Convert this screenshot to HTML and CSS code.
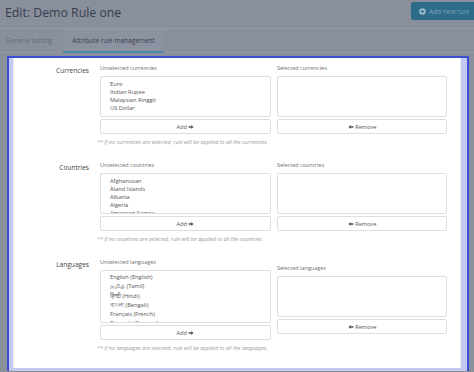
FILE: index.html
```html
<!DOCTYPE html>
<html lang="en">
<head>
<meta charset="utf-8">
<title>Edit: Demo Rule one</title>
<link rel="stylesheet" href="styles.css">
</head>
<body>
<header class="page-head">
  <h1 class="page-title">Edit: Demo Rule one</h1>
  <button class="btn-new-rule" type="button">
    <svg class="ico-plus" viewBox="0 0 16 16" aria-hidden="true"><circle cx="8" cy="8" r="7.5" fill="currentColor"/><path d="M7 4h2v3h3v2H9v3H7V9H4V7h3z" fill="#2c6c88"/></svg>
    Add new rule
  </button>
</header>
<nav class="tabs">
  <a class="tab">General setting</a>
  <a class="tab active">Attribute rule management</a>
</nav>
<div class="tour-panel">
  <div class="card">
    <section class="rule">
      <div class="rule-grid">
        <div class="rule-label">Currencies</div>
        <div class="col">
          <div class="field-label">Unselected currencies</div>
          <div class="listbox">
            <div>Euro</div><div>Indian Rupee</div><div>Malaysian Ringgit</div><div>US Dollar</div>
          </div>
          <button class="btn" type="button">Add <svg class="arrow" viewBox="0 0 16 16"><path d="M1.5 6.3h7.2V2.8L14.8 8l-6.1 5.2V9.7H1.5z" fill="currentColor"/></svg></button>
        </div>
        <div class="col">
          <div class="field-label">Selected currencies</div>
          <div class="listbox"></div>
          <button class="btn" type="button"><svg class="arrow" viewBox="0 0 16 16"><path d="M14.5 6.3H7.3V2.8L1.2 8l6.1 5.2V9.7h7.2z" fill="currentColor"/></svg> Remove</button>
        </div>
      </div>
      <p class="note">** If no currencies are selected, rule will be applied to all the currencies.</p>
    </section>

    <section class="rule">
      <div class="rule-grid">
        <div class="rule-label">Countries</div>
        <div class="col">
          <div class="field-label">Unselected countries</div>
          <div class="listbox">
            <div>Afghanistan</div><div>Åland Islands</div><div>Albania</div><div>Algeria</div><div>American Samoa</div>
          </div>
          <button class="btn" type="button">Add <svg class="arrow" viewBox="0 0 16 16"><path d="M1.5 6.3h7.2V2.8L14.8 8l-6.1 5.2V9.7H1.5z" fill="currentColor"/></svg></button>
        </div>
        <div class="col">
          <div class="field-label">Selected countries</div>
          <div class="listbox"></div>
          <button class="btn" type="button"><svg class="arrow" viewBox="0 0 16 16"><path d="M14.5 6.3H7.3V2.8L1.2 8l6.1 5.2V9.7h7.2z" fill="currentColor"/></svg> Remove</button>
        </div>
      </div>
      <p class="note">** If no countries are selected, rule will be applied to all the countries.</p>
    </section>

    <section class="rule">
      <div class="rule-grid">
        <div class="rule-label">Languages</div>
        <div class="col">
          <div class="field-label">Unselected languages</div>
          <div class="listbox listbox-tall">
            <div>English (English)</div><div>தமிழ் (Tamil)</div><div>हिन्दी (Hindi)</div><div>বাংলা (Bengali)</div><div>Français (French)</div><div>Deutsch (German)</div>
          </div>
          <button class="btn" type="button">Add <svg class="arrow" viewBox="0 0 16 16"><path d="M1.5 6.3h7.2V2.8L14.8 8l-6.1 5.2V9.7H1.5z" fill="currentColor"/></svg></button>
        </div>
        <div class="col">
          <div class="field-label">Selected languages</div>
          <div class="listbox"></div>
          <button class="btn" type="button"><svg class="arrow" viewBox="0 0 16 16"><path d="M14.5 6.3H7.3V2.8L1.2 8l6.1 5.2V9.7h7.2z" fill="currentColor"/></svg> Remove</button>
        </div>
      </div>
      <p class="note">** If no languages are selected, rule will be applied to all the languages.</p>
    </section>
  </div>
</div>
</body>
</html>
```
FILE: styles.css
```css
html, body {
  margin: 0;
  padding: 0;
}
body {
  background: #8a8f9c;
  font-family: "Open Sans", "Noto Sans", "DejaVu Sans", sans-serif;
  overflow: hidden;
  width: 474px;
  height: 372px;
}

.page-head {
  display: flex;
  justify-content: space-between;
  align-items: flex-start;
  height: 28px;
  border-bottom: 1px solid #959aa7;
  width: 480px;
}
.page-title {
  margin: 0;
  padding: 4px 0 0 5px;
  font-size: 12.3px;
  font-weight: 400;
  line-height: 18px;
  color: #363d4e;
}
.btn-new-rule {
  margin-top: 2px;
  height: 18px;
  width: 69px;
  padding: 0 0 0 8px;
  border: none;
  border-radius: 2px;
  background: #2c6c88;
  color: #7fa3b6;
  font-family: inherit;
  font-size: 6.5px;
  display: flex;
  align-items: center;
  gap: 3px;
  white-space: nowrap;
}
.ico-plus {
  width: 7px;
  height: 7px;
  color: #9dbac8;
}

.tabs {
  display: flex;
  height: 23px;
  border-bottom: 1px solid #959aa7;
}
.tab {
  display: flex;
  align-items: center;
  padding: 0 9px;
  font-size: 6.5px;
  color: #656b7a;
  border-bottom: 2px solid transparent;
  margin-bottom: -1px;
}
.tab:first-child {
  padding-left: 6px;
  padding-right: 11px;
}
.tab.active {
  color: #3a4152;
  border-bottom-color: #4b88a3;
  background: #8d92a0;
}

.tour-panel {
  margin: 3px 5px 0 7px;
  border: 2px solid #3d4ed6;
  border-bottom: none;
  background: #c3c8f1;
  padding: 0 6px 3px 4px;
}
.card {
  background: #fff;
  border: 1px solid #ececec;
  border-top: none;
  border-bottom: none;
  padding: 6px 0 16px;
}

.rule + .rule {
  margin-top: 15px;
}
.rule-grid {
  display: grid;
  grid-template-columns: 80px 171px 170px;
  column-gap: 6px;
  align-items: center;
}
.rule-label {
  align-self: start;
  text-align: right;
  padding: 2px 5px 0 0;
  font-size: 6.6px;
  line-height: 9px;
  color: #444;
}
.col {
  display: flex;
  flex-direction: column;
}
.field-label {
  font-size: 5.5px;
  line-height: 9px;
  color: #6f6f6f;
  margin-bottom: 3px;
}
.listbox {
  box-sizing: border-box;
  height: 41px;
  border: 1px solid #dedede;
  border-radius: 2px;
  padding: 3px 9px;
  overflow: hidden;
  font-size: 5.7px;
  line-height: 8px;
  color: #555;
}
.listbox-tall {
  height: 53px;
  padding-top: 2px;
  line-height: 9.3px;
}
.btn {
  box-sizing: border-box;
  margin-top: 2px;
  height: 15px;
  border: 1px solid #dedede;
  border-radius: 2px;
  background: #fff;
  font-family: inherit;
  font-size: 5.6px;
  color: #555;
  display: flex;
  align-items: center;
  justify-content: center;
  gap: 1.5px;
  padding: 0;
}
.arrow {
  width: 6px;
  height: 6px;
  color: #555;
}
.note {
  margin: 4px 0 0 83px;
  font-size: 5.4px;
  line-height: 8px;
  font-style: italic;
  color: #9a9a9a;
  white-space: nowrap;
}
```
